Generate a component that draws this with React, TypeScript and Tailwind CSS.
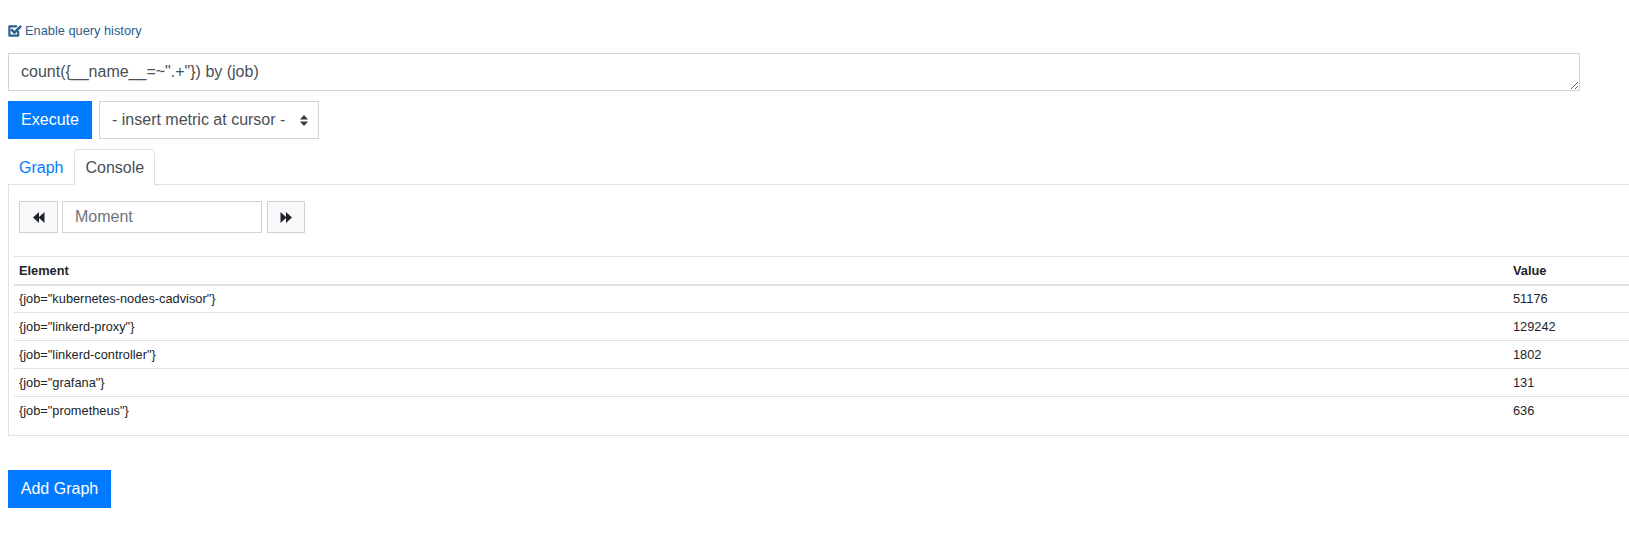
import React from "react";

const rows: [string, string][] = [
  ['{job="kubernetes-nodes-cadvisor"}', "51176"],
  ['{job="linkerd-proxy"}', "129242"],
  ['{job="linkerd-controller"}', "1802"],
  ['{job="grafana"}', "131"],
  ['{job="prometheus"}', "636"],
];

function CheckSquareIcon() {
  return (
    <svg width="14" height="12" viewBox="0 0 14 12" fill="none">
      <path
        d="M10.2 6.8 V10.6 H1.4 V1.4 H8.2"
        stroke="#2a5f8e"
        strokeWidth="2.2"
        strokeLinejoin="round"
        strokeLinecap="round"
      />
      <path
        d="M4 5.2 L6.4 7.6 L12.4 1.6"
        stroke="#2a5f8e"
        strokeWidth="2.6"
        strokeLinejoin="round"
        strokeLinecap="round"
      />
    </svg>
  );
}

function BackIcon() {
  return (
    <svg width="12" height="11" viewBox="0 0 12 11">
      <path d="M0 5.5 L6 0 V11 Z" fill="#212529" />
      <path d="M5.5 5.5 L11.5 0 V11 Z" fill="#212529" />
    </svg>
  );
}

function FwdIcon() {
  return (
    <svg width="12" height="11" viewBox="0 0 12 11">
      <path d="M0.5 0 L6.5 5.5 L0.5 11 Z" fill="#212529" />
      <path d="M6 0 L12 5.5 L6 11 Z" fill="#212529" />
    </svg>
  );
}

export default function App() {
  return (
    <div
      className="w-[1629px] h-[546px] overflow-hidden bg-white text-[#212529]"
      style={{ fontFamily: '"Liberation Sans", Arial, sans-serif' }}
    >
      <div className="pl-2 pt-[23px]">
        <div className="flex items-center h-[16px] gap-[3px] text-[12.8px] text-[#2a5f8e]">
          <CheckSquareIcon />
          <span>Enable query history</span>
        </div>
        <textarea
          className="block mt-[14px] w-[1572px] h-[38px] border border-[#ced4da] px-[12px] py-[6px] text-[16px] leading-[24px] text-[#495057] outline-none resize-y"
          defaultValue={'count({__name__=~".+"}) by (job)'}
          rows={1}
        />
        <div className="flex mt-[10px] gap-[7px] h-[38px]">
          <button className="w-[84px] h-[38px] bg-[#007bff] text-white text-[16px]">Execute</button>
          <div className="w-[220px] h-[38px] border border-[#ced4da] flex items-center justify-between pl-[12px] pr-[10px] text-[16px] text-[#495057]">
            <span>- insert metric at cursor -</span>
            <svg width="8" height="11" viewBox="0 0 8 11">
              <path d="M4 0 L8 4.5 L0 4.5 Z" fill="#343a40" />
              <path d="M0 6.5 L8 6.5 L4 11 Z" fill="#343a40" />
            </svg>
          </div>
        </div>
        <div className="flex mt-[10px] h-[36px] border-b border-[#dee2e6] w-[1700px]">
          <div className="px-[11px] pt-[7px] text-[16px] text-[#007bff]">Graph</div>
          <div className="px-[10px] pt-[6px] text-[16px] text-[#495057] border border-b-0 border-[#dee2e6] rounded-t-[4px] bg-white -mb-px h-[37px]">
            Console
          </div>
        </div>
        <div className="w-[1700px] border border-t-0 border-[#dee2e6] pt-[16px] pb-[10px] px-[5px]">
          <div className="flex items-center gap-[4px] ml-[5px] h-[32px]">
            <button className="w-[39px] h-[32px] bg-[#f8f9fa] border border-[#cfd2d5] flex items-center justify-center">
              <BackIcon />
            </button>
            <input
              className="w-[200px] h-[32px] border border-[#ced4da] px-[12px] text-[16px] text-[#495057] placeholder-[#6c757d] outline-none"
              placeholder="Moment"
            />
            <button className="ml-[1px] w-[38px] h-[32px] bg-[#f8f9fa] border border-[#cfd2d5] flex items-center justify-center">
              <FwdIcon />
            </button>
          </div>
          <table className="mt-[23px] w-full border-collapse text-[12.8px] text-[#212529]">
            <thead>
              <tr className="h-[28px] border-t border-[#dee2e6]">
                <th className="w-[1494px] text-left font-bold px-[5px] border-b-2 border-[#dee2e6]">Element</th>
                <th className="text-left font-bold px-[5px] border-b-2 border-[#dee2e6]">Value</th>
              </tr>
            </thead>
            <tbody>
              {rows.map(([e, v], i) => (
                <tr key={i} className={"h-[28px] " + (i > 0 ? "border-t border-[#dee2e6]" : "")}>
                  <td className="px-[5px]">{e}</td>
                  <td className="px-[5px]">{v}</td>
                </tr>
              ))}
            </tbody>
          </table>
        </div>
        <button className="mt-[34px] w-[103px] h-[38px] bg-[#007bff] text-white text-[16px]">Add Graph</button>
      </div>
    </div>
  );
}
